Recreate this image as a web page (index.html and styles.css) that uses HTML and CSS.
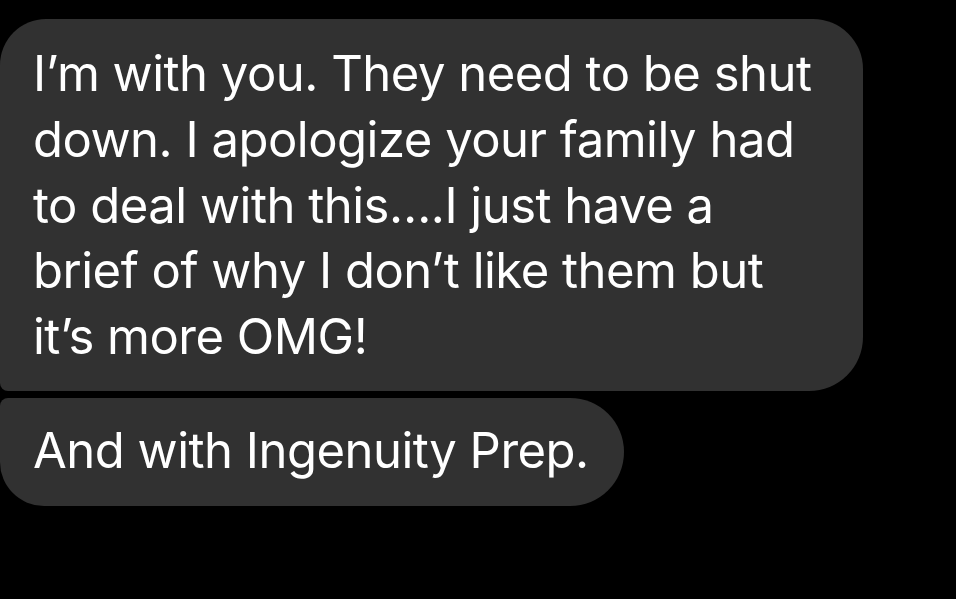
FILE: index.html
```html
<!DOCTYPE html>
<html>
<head>
<title>Messages</title>
<meta name="viewport" content="width=device-width,initial-scale=1"/>
<link rel="stylesheet" href="styles.css">
</head>
<body>
<div class="thread">
	<div class="bubble first">I&rsquo;m with you. They need to be shut<br>down. I apologize your family had<br>to deal with this&hellip;.I just have a<br>brief of why I don&rsquo;t like them but<br>it&rsquo;s more OMG!</div>
	<div class="bubble last">And with Ingenuity Prep.</div>
</div>
</body>
</html>
```

FILE: styles.css
```css
body {
	background-color: black;
	margin: 0;
	font-family: Inter, "Liberation Sans", sans-serif;
}
.thread {
	display: flex;
	flex-direction: column;
	align-items: flex-start;
	gap: 7px;
	padding-top: 19px;
}
.bubble {
	background-color: #313131;
	color: white;
	font-size: 49px;
	letter-spacing: -0.5px;
	line-height: 65.75px;
	white-space: nowrap;
}
.first {
	width: 797px;
	padding: 22px 33px 21px 33px;
	border-radius: 46px 50px 54px 8px;
}
.last {
	padding: 20px 35px 22px 33px;
	border-radius: 8px 54px 54px 44px;
}
```
